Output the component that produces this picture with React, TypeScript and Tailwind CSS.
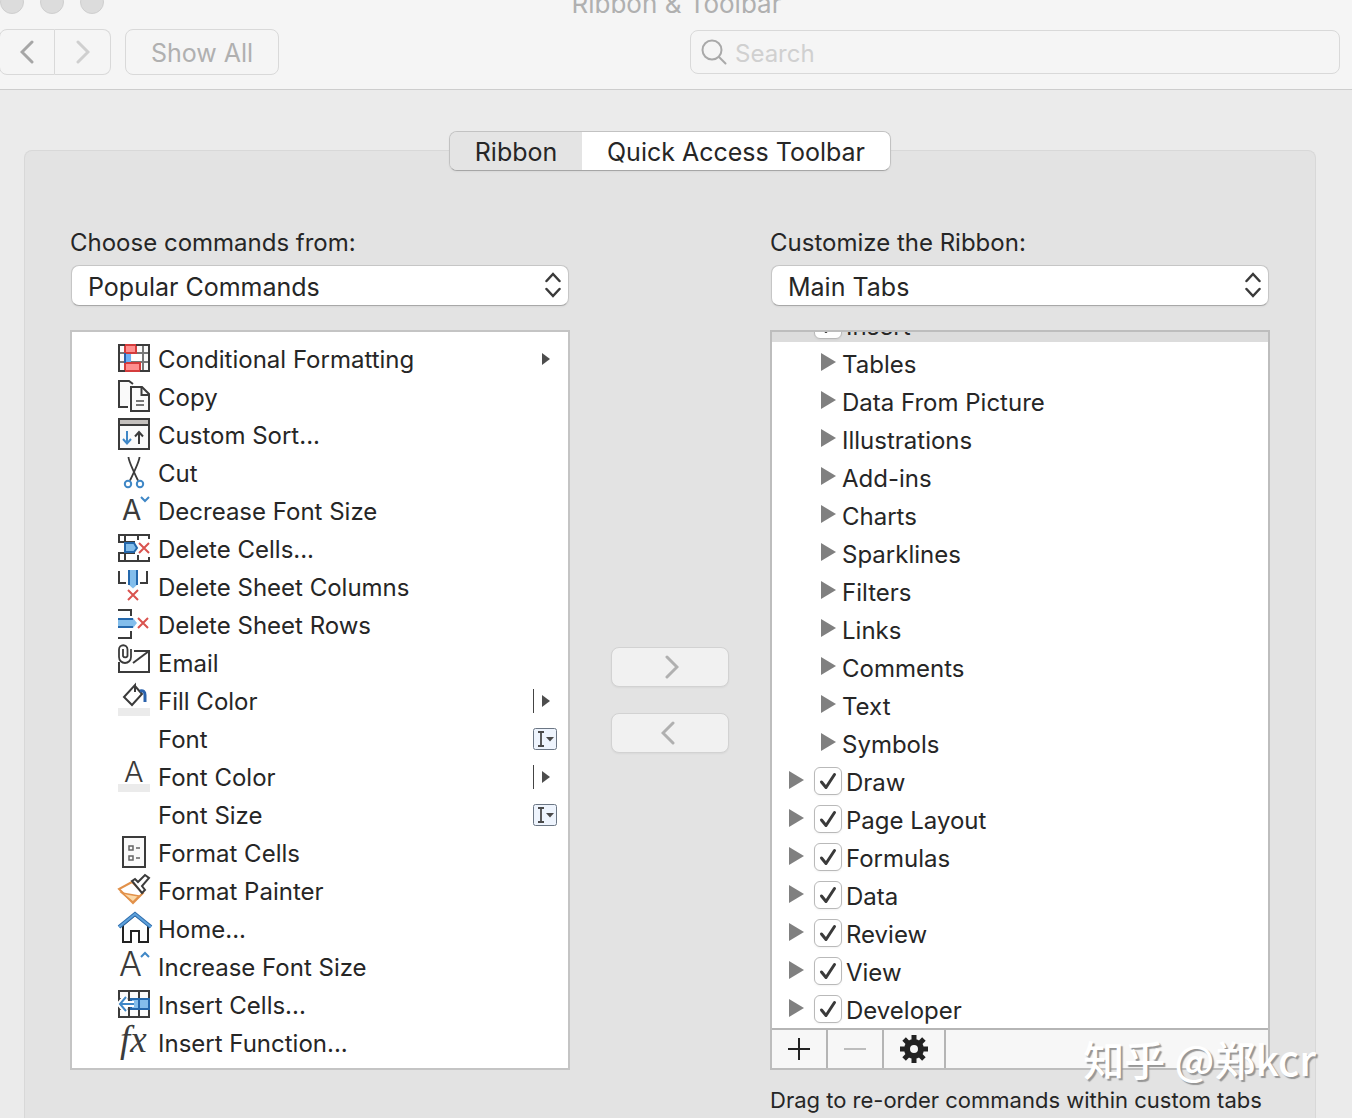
import React from "react";

const INK = "#3b3b3b";
const BLUE = "#3f87c6";
const PALE = "#83beec";
const RED = "#d9534f";

function Icon({ children }: { children?: React.ReactNode }) {
  return (
    <svg viewBox="0 0 32 38" className="h-[38px] w-8 shrink-0 overflow-visible" fill="none" stroke={INK} strokeWidth="2" aria-hidden="true">
      {children}
    </svg>
  );
}

const conditional = (
  <>
    <rect x="1" y="5" width="30" height="26" fill="#fafafa" />
    <path d="M1 13H31M1 22H31M25 5V31" stroke="#777" />
    <rect x="14" y="14" width="10" height="7" fill="#fff" stroke="none" />
    <rect x="7" y="5" width="11" height="8" fill="#ff8f8f" stroke="#d43c3c" />
    <rect x="7" y="23" width="15" height="8" fill="#ff8f8f" stroke="#d43c3c" />
    <rect x="7" y="14" width="6" height="8" fill="#6cb0f5" stroke="none" />
    <path d="M7 13V23" stroke="#2b5fa8" />
    <path d="M1 5H7M18 5H31V31H22M7 31H1V4" />
  </>
);

const copy = (
  <>
    <path d="M10 29H1V3H11L15 6" fill="#fafafa" />
    <path d="M13 9H24L31 16V33H13Z" fill="#fafafa" />
    <path d="M23.500 9V17H31" />
    <path d="M18 23H26M18 27H26" stroke="#777" />
  </>
);

const sort = (
  <>
    <rect x="1" y="3" width="30" height="30" fill="#fafafa" />
    <rect x="2" y="4" width="28" height="4" fill="#c4c0bd" stroke="none" />
    <path d="M1 9H31" />
    <path d="M9 15V27M5 23L9 27.500L13 23" stroke={BLUE} />
    <path d="M21 28V16M17 20.500L21 16L25 20.500" />
  </>
);

const cut = (
  <>
    <path d="M10.500 3Q10.500 7 20 26.500M21.500 3Q21.500 7 12 26.500" strokeWidth="1.800" />
    <circle cx="10" cy="30" r="3.200" stroke={BLUE} />
    <circle cx="22" cy="30" r="3.200" stroke={BLUE} />
  </>
);

const decrease = (
  <>
    <text x="4" y="28" fontFamily="Inter, sans-serif" fontSize="28" fill={INK} stroke="none">A</text>
    <path d="M23 5L27 9L31 5" stroke={BLUE} />
  </>
);

const increase = (
  <>
    <text x="1" y="28" fontFamily="Inter, sans-serif" fontSize="34" fontWeight="300" fill={INK} stroke="none">A</text>
    <path d="M23 9L27 5L31 9" stroke={BLUE} />
  </>
);

const deleteCells = (
  <>
    <path d="M1 4V12H31M31 5H1M1 32V23H31M31 31H1M31 4V9M31 27V32M7 5V31M20 5V12M20 23V31" />
    <rect x="17" y="10" width="15" height="15" fill="#fff" stroke="none" />
    <path d="M7 13H16L19 18L16 22H7Z" fill={PALE} stroke="#2468ac" />
    <path d="M21 13L31 23M31 13L21 23" stroke={RED} />
  </>
);

const deleteColumns = (
  <>
    <path d="M1 3V15H8M29 3V15H22" />
    <path d="M10 2H20V16L15 20.500L10 16Z" fill={PALE} stroke="none" />
    <path d="M11 2V17M19 2V17" stroke="#2468ac" />
    <path d="M10 22L20 32M20 22L10 32" stroke={RED} />
  </>
);

const deleteRows = (
  <>
    <path d="M0 4H13V10M13 25V32H0" />
    <path d="M0 12H15L19 17L15 22H0Z" fill={PALE} stroke="none" />
    <path d="M0 13H15M0 21H15" stroke="#2468ac" />
    <path d="M20 12L30 22M30 12L20 22" stroke={RED} />
  </>
);

const email = (
  <>
    <path d="M1 18V28H31V7H16" />
    <path d="M31 7L15 19" />
    <path d="M5 5V12A2.500 2.500 0 0 0 9.500 12V5.500A4 4 0 0 0 1 5.500V13A6 6 0 0 0 13 13V5" strokeWidth="1.800" />
  </>
);

const fill = (
  <>
    <rect x="0" y="26" width="32" height="8" fill="#ebebeb" stroke="none" />
    <path d="M17 10V3L6 15L14 23L24 12L17 4" />
    <path d="M22 9Q27 8 27 13V20" stroke="#2a62ac" strokeWidth="3" />
  </>
);

const fontColor = (
  <>
    <rect x="0" y="26" width="32" height="8" fill="#ebebeb" stroke="none" />
    <text x="6" y="24" fontFamily="Inter, sans-serif" fontSize="29" fontWeight="300" fill={INK} stroke="none">A</text>
  </>
);

const formatCells = (
  <>
    <rect x="5" y="3" width="22" height="30" fill="#fafafa" />
    <path d="M11 12H15V16H11ZM11 22H15V26H11Z" stroke="#666" strokeWidth="1.500" />
    <path d="M18 14H22M18 24H22" stroke="#666" strokeWidth="1.500" />
  </>
);

const painter = (
  <>
    <path d="M14 10L1 17L15 31L25 21Z" fill="#fff" stroke="#e2914a" />
    <path d="M4 21L21 24L15 30Z" fill="#fbd9a8" stroke="#e2914a" strokeWidth="1.500" />
    <path d="M14 9L17 7L20 10L27 3L31 6L24 14L27 18L24 21Z" fill="#fff" />
  </>
);

const home = (
  <>
    <path d="M5 15V32H13V21H21V32H30V15L17 5Z" fill="#fff" stroke="#222" />
    <path d="M1 17L17 4L33 17" stroke="#2f6eae" strokeWidth="4" />
    <path d="M1 17L17 4L33 17" stroke="#5fa2dc" strokeWidth="2" />
  </>
);

const insertCells = (
  <>
    <rect x="1" y="5" width="30" height="26" fill="#fafafa" />
    <path d="M1 13H31M1 23H31M11 5V31M21 5V31" />
    <rect x="13" y="13" width="18" height="10" fill={PALE} stroke="#2468ac" />
    <path d="M21 13V23" stroke="#2468ac" />
    <path d="M16 18H2M8 11L2 18L8 25" stroke="#fff" strokeWidth="6" />
    <path d="M16 18H2M8 11L2 18L8 25" stroke={BLUE} />
    <path d="M1 4V9M1 27V32" />
  </>
);

const fx = (
  <text x="2" y="28" fontFamily="'Liberation Serif', serif" fontStyle="italic" fontSize="37" fill={INK} stroke="none">fx</text>
);

type Extra = "menu" | "split" | "combo";
const commands: { name: string; icon?: React.ReactNode; extra?: Extra }[] = [
  { name: "Conditional Formatting", icon: conditional, extra: "menu" },
  { name: "Copy", icon: copy },
  { name: "Custom Sort...", icon: sort },
  { name: "Cut", icon: cut },
  { name: "Decrease Font Size", icon: decrease },
  { name: "Delete Cells...", icon: deleteCells },
  { name: "Delete Sheet Columns", icon: deleteColumns },
  { name: "Delete Sheet Rows", icon: deleteRows },
  { name: "Email", icon: email },
  { name: "Fill Color", icon: fill, extra: "split" },
  { name: "Font", extra: "combo" },
  { name: "Font Color", icon: fontColor, extra: "split" },
  { name: "Font Size", extra: "combo" },
  { name: "Format Cells", icon: formatCells },
  { name: "Format Painter", icon: painter },
  { name: "Home...", icon: home },
  { name: "Increase Font Size", icon: increase },
  { name: "Insert Cells...", icon: insertCells },
  { name: "Insert Function...", icon: fx },
];

const groups = ["Tables", "Data From Picture", "Illustrations", "Add-ins", "Charts", "Sparklines", "Filters", "Links", "Comments", "Text", "Symbols"];
const tabs = ["Draw", "Page Layout", "Formulas", "Data", "Review", "View", "Developer"];

function ExtraMark({ kind }: { kind: Extra }) {
  return (
    <svg viewBox="0 0 24 24" className="ml-auto size-6 shrink-0" aria-hidden="true">
      {kind === "combo" ? (
        <>
          <rect x="0.500" y="1.500" width="23" height="21" rx="2" fill="#eef4fd" stroke="#6b7684" />
          <path d="M5 5H11M8 5V19M5 19H11" stroke="#4a4a4a" strokeWidth="1.800" fill="none" />
          <path d="M13 10H21L17 14.500Z" fill="#4a4a4a" />
        </>
      ) : (
        <>
          {kind === "split" && <path d="M0.500 0V24" stroke="#444" />}
          <path d="M9 6L17 12L9 18Z" fill="#4d4d4d" />
        </>
      )}
    </svg>
  );
}

function Chevron({ dir, className }: { dir: "left" | "right"; className: string }) {
  return (
    <svg viewBox="0 0 14 24" className={className} fill="none" stroke="currentColor" strokeWidth="3" strokeLinecap="round" strokeLinejoin="miter" aria-hidden="true">
      <path d={dir === "left" ? "M12 2L2 12L12 22" : "M2 2L12 12L2 22"} />
    </svg>
  );
}

function Picker({ label, id, value }: { label: string; id: string; value: string }) {
  return (
    <div>
      <label htmlFor={id} className="block text-2xl leading-8">{label}</label>
      <div className="relative mt-[6px] px-px">
        <select id={id} className="block h-[41px] w-full appearance-none rounded-lg border border-[#c6c6c6] border-b-[#a8a8a8] bg-white pt-[3px] pr-10 pl-4 text-[25px] shadow-xs">
          <option>{value}</option>
        </select>
        <svg viewBox="0 0 16 26" className="pointer-events-none absolute top-[7px] right-[9px] h-[26px] w-4" fill="none" stroke="#3a3a3a" strokeWidth="2.500" strokeLinecap="round" aria-hidden="true">
          <path d="M1.500 9L8 2L14.500 9M1.500 17L8 24L14.500 17" />
        </svg>
      </div>
    </div>
  );
}

function Disclosure({ name, open }: { name: string; open?: boolean }) {
  return (
    <button type="button" aria-label={`Toggle ${name}`} aria-expanded={!!open} className="flex shrink-0">
      <svg viewBox="0 0 16 20" className="h-5 w-4" aria-hidden="true">
        <path d={open ? "M0 2H16L8 16Z" : "M1 0L16 9L1 18Z"} fill="#808080" />
      </svg>
    </button>
  );
}

function TabRow({ name, selected }: { name: string; selected?: boolean }) {
  return (
    <li className={selected ? "flex h-[38px] items-center bg-[#dcdcdc] pt-1 pl-4" : "flex h-[38px] items-center pt-1 pl-4"}>
      <Disclosure name={name} open={selected} />
      <label className="ml-[10px] flex items-center">
        <span className="relative block size-7">
          <input type="checkbox" defaultChecked className="peer block size-7 appearance-none rounded-md border border-[#b9b9b9] bg-white shadow-xs" />
          <svg viewBox="0 0 28 28" className="pointer-events-none absolute inset-0 hidden size-7 peer-checked:block" fill="none" stroke="#3a3a3a" strokeWidth="3" strokeLinecap="round" strokeLinejoin="round" aria-hidden="true">
            <path d="M7.500 15L12 20.500L20.500 7.500" />
          </svg>
        </span>
        <span className="ml-1 pt-1 text-2xl leading-7">{name}</span>
      </label>
    </li>
  );
}

export default function App() {
  return (
    <div className="relative flex h-screen flex-col overflow-hidden bg-[#ebebeb] font-[Inter,sans-serif] text-[#262626]">
      <header className="border-b border-[#cdcdcd] bg-[#f5f5f5] pb-[14px]">
        <div className="relative flex h-[18px] items-end justify-center overflow-hidden pl-px">
          <div className="absolute bottom-1 left-0 flex gap-4">
            <span className="size-6 rounded-full border border-[#cfcfcf] bg-[#dcdcdc]" />
            <span className="size-6 rounded-full border border-[#cfcfcf] bg-[#dcdcdc]" />
            <span className="size-6 rounded-full border border-[#cfcfcf] bg-[#dcdcdc]" />
          </div>
          <h1 className="text-[26px] leading-7 text-[#b0b0b0]">Ribbon &amp; Toolbar</h1>
        </div>
        <div className="mt-[11px] flex items-center pr-3">
          <div className="-ml-px flex">
            <button type="button" aria-label="Back" className="flex h-[46px] w-14 items-center justify-center rounded-l-lg border border-[#d9d9d9] text-[#a6a6a6]">
              <Chevron dir="left" className="h-6 w-[14px]" />
            </button>
            <button type="button" aria-label="Forward" className="flex h-[46px] w-14 items-center justify-center rounded-r-lg border border-l-0 border-[#d9d9d9] text-[#cfcfcf]">
              <Chevron dir="right" className="h-6 w-[14px]" />
            </button>
          </div>
          <button type="button" className="ml-[14px] h-[46px] w-[154px] rounded-lg border border-[#d9d9d9] pt-[3px] text-[25px] text-[#b0b0b0]">Show All</button>
          <label className="ml-auto flex h-11 w-[650px] items-center gap-2 rounded-lg border border-[#d9d9d9] pl-[10px]">
            <svg viewBox="0 0 26 26" className="size-[26px] shrink-0" fill="none" stroke="#a9a9a9" strokeWidth="2" strokeLinecap="round" aria-hidden="true">
              <circle cx="11" cy="11" r="9.500" />
              <path d="M18 18L24.500 24.500" />
            </svg>
            <input type="text" aria-label="Search" placeholder="Search" className="min-w-0 flex-1 bg-transparent pt-[3px] text-2xl outline-none placeholder:text-[#d0d0d0]" />
          </label>
        </div>
      </header>

      <main className="flex flex-1 flex-col pt-[41px] pr-9 pl-6">
        <div role="tablist" className="relative z-10 -mb-[21px] flex h-10 self-center overflow-hidden rounded-lg border border-[#c2c2c2] border-b-[#a6a6a6] text-[25px] shadow-xs">
          <button type="button" role="tab" aria-selected="true" className="w-[132px] bg-[#e4e4e4] pt-[2px]">Ribbon</button>
          <button type="button" role="tab" aria-selected="false" className="w-[308px] bg-white pt-[2px]">Quick Access Toolbar</button>
        </div>
        <section className="grid flex-1 grid-cols-[5fr_2fr_5fr] content-start rounded-t-lg border border-b-0 border-[#d8d8d8] bg-[#e3e3e3] px-[45px] pt-19">
          <Picker id="commands-from" label="Choose commands from:" value="Popular Commands" />
          <div />
          <Picker id="customize" label="Customize the Ribbon:" value="Main Tabs" />

          <ul className="mt-6 border-2 border-[#c4c4c4] bg-white pt-2 pb-[6px]">
            {commands.map((c) => (
              <li key={c.name} className="flex h-[38px] items-center gap-2 pr-[11px] pl-[46px] text-2xl whitespace-nowrap">
                <Icon>{c.icon}</Icon>
                <span className="pt-[2px]">{c.name}</span>
                {c.extra && <ExtraMark kind={c.extra} />}
              </li>
            ))}
          </ul>

          <div className="mt-6 flex flex-col items-center justify-center gap-[26px] text-[#b0b0b0]">
            <button type="button" aria-label="Add command" className="flex h-10 w-[118px] items-center justify-center rounded-lg border border-[#d2d2d2] bg-[#f1f1f1] shadow-xs">
              <Chevron dir="right" className="ml-1 h-6 w-[14px]" />
            </button>
            <button type="button" aria-label="Remove command" className="flex h-10 w-[118px] items-center justify-center rounded-lg border border-[#d2d2d2] bg-[#f1f1f1] shadow-xs">
              <Chevron dir="left" className="mr-1 h-6 w-[14px]" />
            </button>
          </div>

          <div className="mt-6 flex flex-col border-2 border-[#bdbdbd] bg-white">
            <div className="flex-1 overflow-hidden">
              <ul className="-mt-7">
                <TabRow name="Insert" selected />
                {groups.map((g) => (
                  <li key={g} className="flex h-[38px] items-center pt-1 pl-12">
                    <Disclosure name={g} />
                    <span className="ml-[6px] pt-1 text-2xl leading-7">{g}</span>
                  </li>
                ))}
                {tabs.map((t) => (
                  <TabRow key={t} name={t} />
                ))}
              </ul>
            </div>
            <div className="flex h-10 border-t-2 border-[#b5b5b5] bg-[#f7f7f7]">
              <button type="button" aria-label="Add" className="flex w-14 items-center justify-center border-r-2 border-[#b5b5b5]">
                <svg viewBox="0 0 22 22" className="size-[22px]" stroke="#222" strokeWidth="2" aria-hidden="true"><path d="M0 11H22M11 0V22" /></svg>
              </button>
              <button type="button" aria-label="Remove" className="flex w-14 items-center justify-center border-r-2 border-[#b5b5b5]">
                <svg viewBox="0 0 22 22" className="size-[22px]" stroke="#bdbdbd" strokeWidth="2" aria-hidden="true"><path d="M0 11H22" /></svg>
              </button>
              <button type="button" aria-label="Settings" className="flex w-[62px] items-center justify-center border-r-2 border-[#b5b5b5]">
                <svg viewBox="0 0 28 28" className="size-7" aria-hidden="true">
                  <circle cx="14" cy="14" r="7" fill="none" stroke="#222" strokeWidth="6" />
                  <path d="M14 0V6M14 22V28M0 14H6M22 14H28M4.100 4.100L8 8M20 20L23.900 23.900M23.900 4.100L20 8M8 20L4.100 23.900" stroke="#222" strokeWidth="5" />
                </svg>
              </button>
            </div>
          </div>
          <p className="col-start-3 mt-4 text-[22px] leading-7 whitespace-nowrap">Drag to re-order commands within custom tabs</p>
        </section>
      </main>

      <div className="pointer-events-none absolute right-9 bottom-[30px] text-[41px] leading-[60px] font-medium text-white font-['Noto_Sans_CJK_SC',sans-serif] [text-shadow:2px_2px_1px_#969696]">知乎 @郑kcr</div>
    </div>
  );
}
